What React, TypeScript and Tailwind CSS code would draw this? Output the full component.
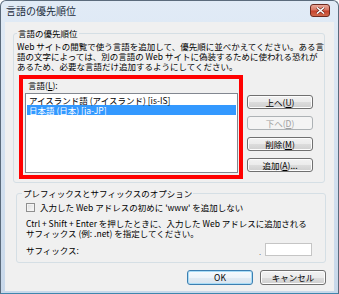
import type { ReactNode } from "react";

const font = "font-['Noto_Sans_CJK_JP','Noto_Sans',sans-serif]";

const btnBase =
  "flex items-center justify-center w-[66px] rounded-[3px] border text-[8.5px] leading-none";
const btnNormal =
  "border-[#707070] text-black bg-[linear-gradient(to_bottom,#f2f2f2_0%,#ebebeb_50%,#dddddd_50%,#cfcfcf_100%)] shadow-[inset_0_0_0_1px_#fcfcfc]";
const btnDisabled = "border-[#adb2b5] text-[#a0a0a0] bg-[#f4f4f4]";

function Button({ children, disabled, className = "" }: { children: ReactNode; disabled?: boolean; className?: string }) {
  return (
    <div className={`${btnBase} ${disabled ? btnDisabled : btnNormal} ${className}`}>
      {children}
    </div>
  );
}

function Closebox() {
  return (
    <div className="mt-[3px] mr-[8px] flex h-[13px] w-[20px] items-center justify-center rounded-[3px] border border-[#6d2a1f] bg-[linear-gradient(to_bottom,#e9a99b_0%,#d77662_45%,#c7432d_55%,#d06a4c_100%)]">
      <svg width="9" height="7" viewBox="0 0 9 7">
        <path d="M1 0.5 L8 6.5 M8 0.5 L1 6.5" stroke="#5a1d14" strokeWidth="2.6" />
        <path d="M1 0.5 L8 6.5 M8 0.5 L1 6.5" stroke="#ffffff" strokeWidth="1.6" />
      </svg>
    </div>
  );
}

export default function App() {
  return (
    <div
      className={`${font} flex h-[294px] w-[339px] flex-col rounded-t-[6px] border border-[#5b6b7c] border-b-[#3f86ad] bg-[linear-gradient(to_bottom,#e1ebf6,#c8d8ea)] text-black`}
    >
      {/* title bar */}
      <div className="flex h-[21px] shrink-0 items-start justify-between">
        <span className="ml-[5px] mt-[4px] text-[10px] leading-[12px] text-[#1c2c3c]">言語の優先順位</span>
        <Closebox />
      </div>

      {/* client area */}
      <div className="mx-[4px] mb-[2px] flex flex-1 flex-col bg-[#f0f0f0]">
        <fieldset className="ml-[8px] mt-[6px] h-[155px] w-[312px] rounded-[3px] border border-[#d5dfe5]">
          <legend className="ml-[3px] px-[1px] text-[8.5px] leading-[10px]">言語の優先順位</legend>
          <div className="pl-[3px]">
            <p className="whitespace-nowrap pt-[3px] text-[8.5px] leading-[10px]">
              Web サイトの閲覧で使う言語を追加して、優先順に並べかえてください。ある言
              <br />
              語の文字によっては、別の言語の Web サイトに偽装するために使われる恐れが
              <br />
              あるため、必要な言語だけ追加するようにしてください。
            </p>
            <div className="mt-[4px] flex">
              <div className="ml-[2px] h-[104px] w-[224px] border-[4px] border-[#ff0000] px-[2px]">
                <div className="pl-[3px] pt-[1px] text-[8.5px] leading-[10px]">
                  言語(<span className="underline">L</span>):
                </div>
                <div className="mt-[3px] h-[80px] w-[213px] border border-[#828790] bg-white p-[1px] text-[8.5px] leading-[10px]">
                  <div className="whitespace-nowrap pl-[2px]">アイスランド語 (アイスランド) [is-IS]</div>
                  <div className="whitespace-nowrap bg-[#3399ff] pl-[2px] text-white">日本語 (日本) [ja-JP]</div>
                </div>
              </div>
              <div className="ml-[4px] mt-[20px] flex flex-col gap-[7px]">
                <Button className="h-[14px]">
                  上へ(<span className="underline">U</span>)
                </Button>
                <Button className="h-[14px]" disabled>
                  下へ(<span className="underline">D</span>)
                </Button>
                <Button className="h-[14px]">
                  削除(<span className="underline">M</span>)
                </Button>
                <Button className="h-[14px]">
                  追加(<span className="underline">A</span>)...
                </Button>
              </div>
            </div>
          </div>
        </fieldset>

        <fieldset className="ml-[11px] mt-[5px] h-[75px] w-[310px] rounded-[3px] border border-[#d5dfe5]">
          <legend className="ml-[5px] px-[1px] text-[8.5px] leading-[10px]">
            プレフィックスとサフィックスのオプション
          </legend>
          <div className="pl-[9px] pr-[13px]">
            <div className="mt-[4px] flex items-center text-[8.5px] leading-[10px]">
              <div className="h-[9px] w-[9px] border border-[#8f8f8f] bg-[linear-gradient(135deg,#dcdcdc,#fbfbfb)] shadow-[inset_0_0_0_1px_#f4f4f4]" />
              <span className="ml-[5px] whitespace-nowrap">入力した Web アドレスの初めに 'www' を追加しない</span>
            </div>
            <p className="mt-[6px] whitespace-nowrap text-[8.5px] leading-[10px]">
              Ctrl + Shift + Enter を押したときに、入力した Web アドレスに追加される
              <br />
              サフィックス (例: .net) を指定してください。
            </p>
            <div className="mt-[5px] flex h-[13px] items-center justify-between text-[8.5px] leading-[10px]">
              <span>サフィックス:</span>
              <div className="flex items-end">
                <span className="mr-[4px] text-[6px] leading-[6px]">.</span>
                <div className="h-[13px] w-[47px] border border-[#c5c5c5] bg-white" />
              </div>
            </div>
          </div>
        </fieldset>

        <div className="mt-[7px] flex justify-end gap-[7px] pr-[8px]">
          <div
            className={`${btnBase} h-[15px] border-[#3c7fb1] bg-[linear-gradient(to_bottom,#f6fafd_0%,#eef4f9_50%,#e2ebf3_50%,#d9e4ee_100%)] shadow-[inset_0_0_0_1px_#a9dcf6]`}
          >
            OK
          </div>
          <Button className="h-[15px]">キャンセル</Button>
        </div>
      </div>
    </div>
  );
}
